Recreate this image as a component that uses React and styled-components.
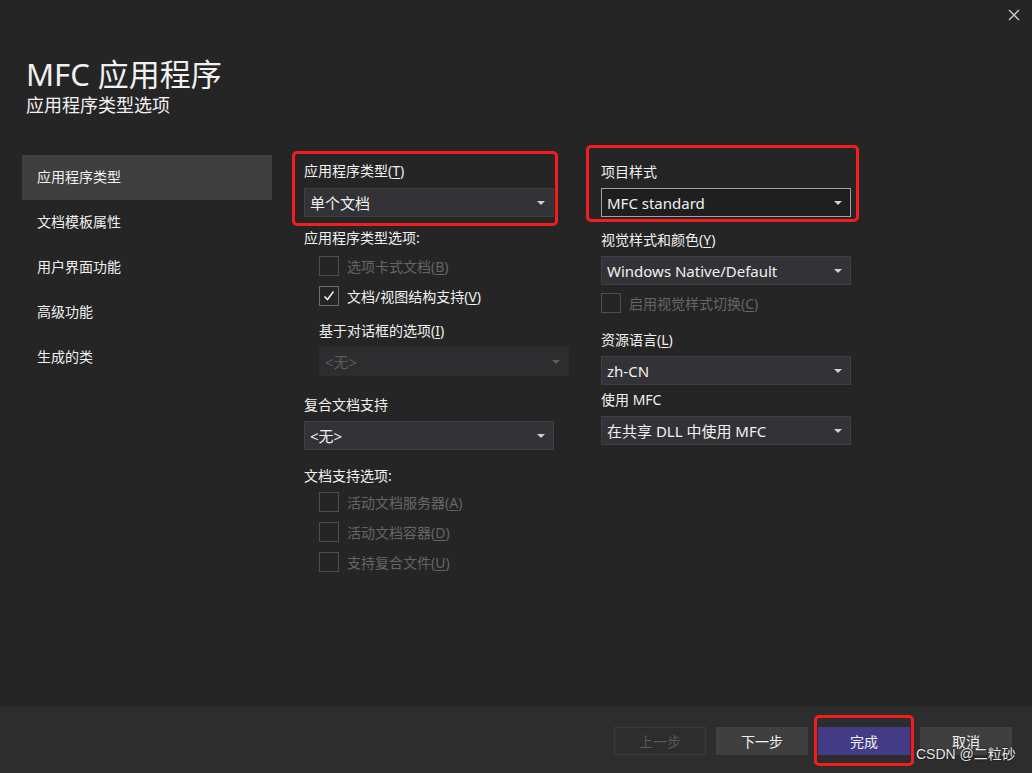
import React from "react";
import styled, { createGlobalStyle, css } from "styled-components";

const GlobalStyle = createGlobalStyle`
  html, body {
    margin: 0;
    padding: 0;
    background: #252526;
  }
  body {
    font-family: "Noto Sans", "Noto Sans CJK SC", sans-serif;
    color: #f1f1f1;
  }
  * { box-sizing: border-box; }
`;

const NAV = ["应用程序类型", "文档模板属性", "用户界面功能", "高级功能", "生成的类"];

const App = () => {
  return (
    <Dialog>
      <GlobalStyle />
      <Main>
        <Header>
          <TitleBlock>
            <Title>MFC 应用程序</Title>
            <Subtitle>应用程序类型选项</Subtitle>
          </TitleBlock>
          <CloseButton aria-label="close">
            <svg width="12" height="12" viewBox="0 0 12 12">
              <path d="M1 1L11 11M11 1L1 11" stroke="#d0d0d0" strokeWidth="1.3" />
            </svg>
          </CloseButton>
        </Header>
        <Body>
          <Nav>
            {NAV.map((item, i) => (
              <NavItem key={item} $active={i === 0}>
                {item}
              </NavItem>
            ))}
          </Nav>

          <ColumnOne>
            <Highlight $inset="-10px -4px -9px -12px">
              <Label>
                应用程序类型(<u>T</u>)
              </Label>
              <Select $mt={7}>
                <span>单个文档</span>
                <Arrow />
              </Select>
            </Highlight>

            <Label $mt={11}>应用程序类型选项:</Label>
            <CheckList $mt={8} $indent={15}>
              <Check label={<>选项卡式文档(<u>B</u>)</>} disabled />
              <Check label={<>文档/视图结构支持(<u>V</u>)</>} checked />
            </CheckList>

            <Label $mt={15} $indent={15}>
              基于对话框的选项(<u>I</u>)
            </Label>
            <Select $mt={6} $indent={15} $disabled>
              <span>&lt;无&gt;</span>
              <Arrow $disabled />
            </Select>

            <Label $mt={19}>复合文档支持</Label>
            <Select $mt={6}>
              <span>&lt;无&gt;</span>
              <Arrow />
            </Select>

            <Label $mt={16}>文档支持选项:</Label>
            <CheckList $mt={6} $indent={15}>
              <Check label={<>活动文档服务器(<u>A</u>)</>} disabled />
              <Check label={<>活动文档容器(<u>D</u>)</>} disabled />
              <Check label={<>支持复合文件(<u>U</u>)</>} disabled />
            </CheckList>
          </ColumnOne>

          <ColumnTwo>
            <Highlight $inset="-16px -8px -5px -15px">
              <Label $mt={1}>项目样式</Label>
              <Select $mt={6} $dark>
                <span>MFC standard</span>
                <Arrow />
              </Select>
            </Highlight>

            <Label $mt={13}>
              视觉样式和颜色(<u>Y</u>)
            </Label>
            <Select $mt={6}>
              <span>Windows Native/Default</span>
              <Arrow />
            </Select>
            <CheckList $mt={8}>
              <Check label={<>启用视觉样式切换(<u>C</u>)</>} disabled />
            </CheckList>

            <Label $mt={17}>
              资源语言(<u>L</u>)
            </Label>
            <Select $mt={6}>
              <span>zh-CN</span>
              <Arrow />
            </Select>

            <Label $mt={5}>使用 MFC</Label>
            <Select $mt={6}>
              <span>在共享 DLL 中使用 MFC</span>
              <Arrow />
            </Select>
          </ColumnTwo>
        </Body>
      </Main>

      <Footer>
        <Button $variant="disabled">上一步</Button>
        <Button>下一步</Button>
        <Highlight $inset="-12px -4px -11px -4px">
          <Button $variant="primary">完成</Button>
        </Highlight>
        <Button>取消</Button>
        <Watermark>CSDN @二粒砂</Watermark>
      </Footer>
    </Dialog>
  );
};

const Check = ({ label, checked, disabled }) => (
  <CheckRow $disabled={disabled}>
    <Box $disabled={disabled}>
      {checked && (
        <svg width="14" height="14" viewBox="0 0 14 14">
          <path d="M2.5 7.5L5.5 10.5L11.5 2.5" fill="none" stroke="#f1f1f1" strokeWidth="1.5" />
        </svg>
      )}
    </Box>
    <span>{label}</span>
  </CheckRow>
);

export default App;

const Dialog = styled.div`
  position: relative;
  width: 1032px;
  height: 773px;
  display: flex;
  flex-direction: column;
  background: #252526;
  overflow: hidden;
`;

const Main = styled.div`
  flex: 1;
  padding-left: 22px;
`;

const Header = styled.div`
  display: flex;
  justify-content: space-between;
  align-items: flex-start;
  height: 155px;
`;

const TitleBlock = styled.div`
  padding-top: 55px;
  padding-left: 4px;
`;

const Title = styled.div`
  font-size: 31px;
  line-height: 38px;
  color: #f1f1f1;
`;

const Subtitle = styled.div`
  margin-top: 0;
  font-size: 18px;
  line-height: 24px;
  color: #f1f1f1;
`;

const CloseButton = styled.div`
  width: 28px;
  height: 28px;
  margin-top: 1px;
  margin-right: 4px;
  display: flex;
  align-items: center;
  justify-content: center;
`;

const Body = styled.div`
  display: flex;
  align-items: flex-start;
`;

const Nav = styled.div`
  width: 250px;
  display: flex;
  flex-direction: column;
`;

const NavItem = styled.div`
  height: 45px;
  display: flex;
  align-items: center;
  padding: 0 0 4px 15px;
  font-size: 14px;
  color: #f1f1f1;
  background: ${(p) => (p.$active ? "#3f3f40" : "transparent")};
`;

const ColumnOne = styled.div`
  width: 297px;
  margin-left: 32px;
  padding-top: 6px;
  display: flex;
  flex-direction: column;
  align-items: flex-start;
`;

const ColumnTwo = styled.div`
  width: 250px;
  padding-top: 6px;
  display: flex;
  flex-direction: column;
  align-items: flex-start;
`;

const Highlight = styled.div`
  position: relative;
  display: flex;
  flex-direction: column;
  &::after {
    content: "";
    position: absolute;
    inset: ${(p) => p.$inset};
    border: 3px solid #f41d1d;
    border-radius: 5px;
    pointer-events: none;
  }
`;

const Label = styled.div`
  margin-top: ${(p) => p.$mt || 0}px;
  margin-left: ${(p) => p.$indent || 0}px;
  font-size: 14px;
  line-height: 20px;
  height: 20px;
  color: #f1f1f1;
  white-space: nowrap;
  u {
    text-underline-offset: 2px;
  }
`;

const Select = styled.div`
  margin-top: ${(p) => p.$mt || 0}px;
  margin-left: ${(p) => p.$indent || 0}px;
  width: 250px;
  height: 29px;
  display: flex;
  align-items: center;
  justify-content: space-between;
  padding: 0 8px 0 5px;
  font-size: 15px;
  color: #f1f1f1;
  background: #333337;
  border: 1px solid #3f3f46;
  ${(p) =>
    p.$dark &&
    css`
      background: #1f1f1f;
      border-color: #a0a0a0;
    `}
  ${(p) =>
    p.$disabled &&
    css`
      background: #2d2d30;
      border-color: #2d2d30;
      color: #5c5c5c;
    `}
  span {
    white-space: nowrap;
  }
`;

const Arrow = styled.i`
  width: 0;
  height: 0;
  border-left: 4px solid transparent;
  border-right: 4px solid transparent;
  border-top: 4px solid ${(p) => (p.$disabled ? "#5c5c5c" : "#d0d0d0")};
`;

const CheckList = styled.div`
  margin-top: ${(p) => p.$mt || 0}px;
  margin-left: ${(p) => p.$indent || 0}px;
  display: flex;
  flex-direction: column;
  gap: 10px;
`;

const CheckRow = styled.div`
  display: flex;
  align-items: center;
  gap: 8px;
  height: 20px;
  font-size: 14px;
  color: ${(p) => (p.$disabled ? "#656565" : "#f1f1f1")};
  u {
    text-underline-offset: 2px;
  }
`;

const Box = styled.div`
  width: 20px;
  height: 20px;
  border: 1px solid ${(p) => (p.$disabled ? "#4e4e4e" : "#6e6e6e")};
  display: flex;
  align-items: center;
  justify-content: center;
`;

const Footer = styled.div`
  position: relative;
  height: 67px;
  background: #2d2d2d;
  border-top: 1px solid #2a2a2a;
  display: flex;
  justify-content: flex-end;
  align-items: flex-start;
  gap: 10px;
  padding: 20px 20px 0 0;
`;

const Button = styled.div`
  width: 92px;
  height: 28px;
  display: flex;
  align-items: center;
  justify-content: center;
  font-size: 14px;
  color: #f1f1f1;
  background: #3f3f3f;
  ${(p) =>
    p.$variant === "primary" &&
    css`
      background: #433b86;
    `}
  ${(p) =>
    p.$variant === "disabled" &&
    css`
      background: #2d2d2d;
      border: 1px solid #3a3a3a;
      color: #5a5a5a;
    `}
`;

const Watermark = styled.div`
  position: absolute;
  left: 916px;
  top: 36px;
  font-family: "Liberation Sans", "Noto Sans CJK SC", sans-serif;
  font-size: 14px;
  color: #e8e8e8;
  text-shadow: 0 0 2px #000;
  white-space: nowrap;
`;
